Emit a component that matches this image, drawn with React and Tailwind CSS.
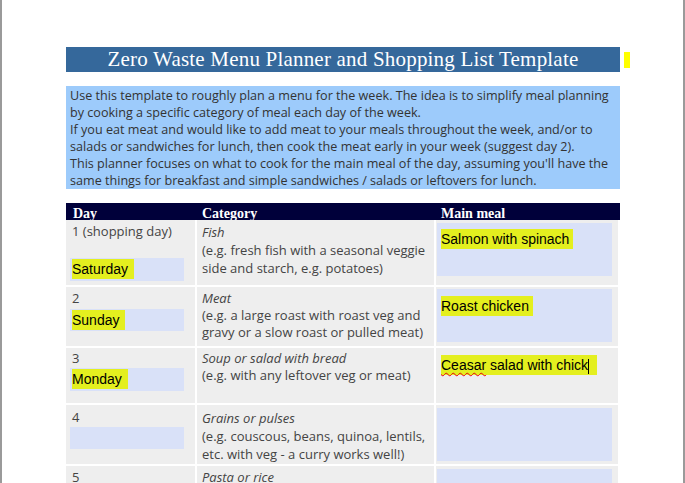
export default function App() {
  const body = "font-['Open_Sans',sans-serif]";
  const hand = "font-['Liberation_Sans',Arial,sans-serif]";
  const hl = "bg-[#e4ef1f] text-black py-[2px]";

  const intro = [
    "Use this template to roughly plan a menu for the week. The idea is to simplify meal planning",
    "by cooking a specific category of meal each day of the week.",
    "If you eat meat and would like to add meat to your meals throughout the week, and/or to",
    "salads or sandwiches for lunch, then cook the meat early in your week (suggest day 2).",
    "This planner focuses on what to cook for the main meal of the day, assuming you'll have the",
    "same things for breakfast and simple sandwiches / salads or leftovers for lunch.",
  ];

  return (
    <div className="h-[483px] w-[685px] overflow-hidden bg-white border-l-2 border-r-2 border-[#9a9a9a]">
      <div className="pl-[64px] pt-[47px] w-[640px]">
        {/* title */}
        <div className="flex items-center">
          <div className="w-[554px] h-[25px] bg-[#35689b] flex items-center justify-center text-white text-[21px] font-['Liberation_Serif',serif] tracking-[0.2px]">
            Zero Waste Menu Planner and Shopping List Template
          </div>
          <div className="ml-[4px] w-[6px] h-[16px] bg-[#ffff00]" />
        </div>

        {/* intro */}
        <div
          className={`mt-[14px] w-[554px] h-[103px] bg-[#9dcbfb] px-[4px] pt-[1px] text-[12.6px] leading-[17px] text-[#333] ${body}`}
        >
          {intro.map((l) => (
            <div key={l} className="whitespace-nowrap">
              {l}
            </div>
          ))}
        </div>

        {/* table */}
        <div className="mt-[14px] w-[554px]">
          <div className="grid grid-cols-[131px_239px_184px] h-[17px] bg-[#00003a] text-white text-[14px] font-bold font-['Liberation_Serif',serif] items-center">
            <div className="pl-[7px]">Day</div>
            <div className="pl-[5px]">Category</div>
            <div className="pl-[5px]">Main meal</div>
          </div>

          <div className={`grid grid-cols-[129px_237px_182px] gap-[2px] text-[13px] leading-[17px] text-[#444] ${body}`}>
            {/* row 1 */}
            <div className="h-[65px] bg-[#eeeeee] pl-[6px] pt-[3px] flex flex-col">
              <div>1 (shopping day)</div>
              <div className={`mt-[18px] -ml-[2px] w-[114px] h-[23px] bg-[#d9e1f8] pl-[2px] pt-[3px] text-[14px] ${hand}`}>
                <span className={`${hl} pr-[6px]`}>Saturday</span>
              </div>
            </div>
            <div className="h-[65px] bg-[#eeeeee] pl-[5px] pt-[3px] leading-[18px]">
              <div className="italic">Fish</div>
              <div>(e.g. fresh fish with a seasonal veggie</div>
              <div>side and starch, e.g. potatoes)</div>
            </div>
            <div className="h-[65px] bg-[#eeeeee] pl-[1px] pt-[3px]">
              <div className={`w-[175px] h-[53px] bg-[#d9e1f8] pl-[4px] pt-[8px] text-[14px] leading-[16px] ${hand}`}>
                <span className={`${hl} pr-[4px]`}>Salmon with spinach</span>
              </div>
            </div>

            {/* row 2 */}
            <div className="h-[59px] bg-[#eeeeee] pl-[6px] pt-[3px] flex flex-col">
              <div>2</div>
              <div className={`mt-[2px] -ml-[2px] w-[114px] h-[22px] bg-[#d9e1f8] pl-[2px] pt-[3px] text-[14px] ${hand}`}>
                <span className={`${hl} pr-[6px]`}>Sunday</span>
              </div>
            </div>
            <div className="h-[59px] bg-[#eeeeee] pl-[5px] pt-[3px]">
              <div className="italic">Meat</div>
              <div>(e.g. a large roast with roast veg and</div>
              <div>gravy or a slow roast or pulled meat)</div>
            </div>
            <div className="h-[59px] bg-[#eeeeee] pl-[1px] pt-[2px]">
              <div className={`w-[175px] h-[53px] bg-[#d9e1f8] pl-[4px] pt-[9px] text-[14px] leading-[16px] ${hand}`}>
                <span className={`${hl} pr-[4px]`}>Roast chicken</span>
              </div>
            </div>

            {/* row 3 */}
            <div className="h-[55px] bg-[#eeeeee] pl-[6px] pt-[2px] flex flex-col">
              <div>3</div>
              <div className={`mt-[1px] -ml-[2px] w-[114px] h-[23px] bg-[#d9e1f8] pl-[2px] pt-[3px] text-[14px] ${hand}`}>
                <span className={`${hl} pr-[6px]`}>Monday</span>
              </div>
            </div>
            <div className="h-[55px] bg-[#eeeeee] pl-[5px] pt-[2px]">
              <div className="italic">Soup or salad with bread</div>
              <div>(e.g. with any leftover veg or meat)</div>
            </div>
            <div className={`h-[55px] bg-[#eeeeee] pl-[5px] pt-[9px] text-[14px] leading-[16px] ${hand}`}>
              <span className={`${hl} pr-[8px]`}>
                <span className="underline decoration-wavy decoration-red-600 decoration-1 underline-offset-2">
                  Ceasar
                </span>{" "}
                salad with chick
                <span className="inline-block w-px h-[15px] bg-black align-middle" />
              </span>
            </div>

            {/* row 4 */}
            <div className="h-[59px] bg-[#eeeeee] pl-[6px] pt-[4px] flex flex-col">
              <div>4</div>
              <div className="mt-[1px] -ml-[2px] w-[114px] h-[22px] bg-[#d9e1f8]" />
            </div>
            <div className="h-[59px] bg-[#eeeeee] pl-[5px] pt-[4px] leading-[18px]">
              <div className="italic">Grains or pulses</div>
              <div>(e.g. couscous, beans, quinoa, lentils,</div>
              <div>etc. with veg - a curry works well!)</div>
            </div>
            <div className="h-[59px] bg-[#eeeeee] pl-[1px] pt-[3px]">
              <div className="w-[175px] h-[53px] bg-[#d9e1f8]" />
            </div>

            {/* row 5 */}
            <div className="h-[59px] bg-[#eeeeee] pl-[6px] pt-[3px]">
              <div>5</div>
            </div>
            <div className="h-[59px] bg-[#eeeeee] pl-[5px] pt-[3px]">
              <div className="italic">Pasta or rice</div>
            </div>
            <div className="h-[59px] bg-[#eeeeee] pl-[1px] pt-[3px]">
              <div className="w-[175px] h-[53px] bg-[#d9e1f8]" />
            </div>
          </div>
        </div>
      </div>
    </div>
  );
}
